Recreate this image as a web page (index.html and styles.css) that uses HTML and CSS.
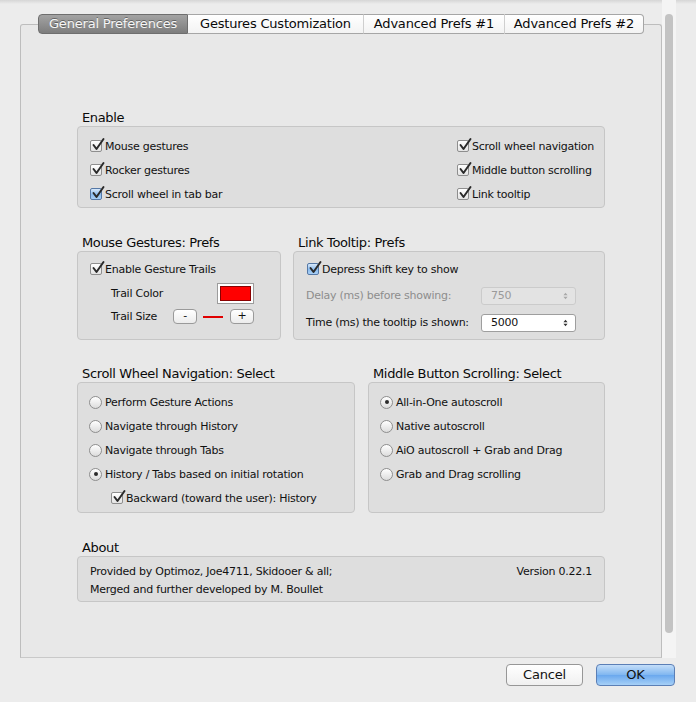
FILE: index.html
```html
<!DOCTYPE html>
<html>
<head>
<meta charset="utf-8">
<link rel="stylesheet" href="styles.css">
</head>
<body>
<div class="window">
  <div class="main">
    <div class="panel-wrap">
      <div class="tabs">
        <div class="tab active">General Preferences</div>
        <div class="tab">Gestures Customization</div>
        <div class="tab">Advanced Prefs #1</div>
        <div class="tab last">Advanced Prefs #2</div>
      </div>
      <div class="panel">
        <div class="group en">
          <div class="glabel">Enable</div>
          <div class="gbox enable">
            <div class="col">
              <div class="row"><span class="cb on"><svg viewBox="0 0 14 14"><path d="M2.5 7 L5.5 11 L12.5 1"/></svg></span>Mouse gestures</div>
              <div class="row"><span class="cb on"><svg viewBox="0 0 14 14"><path d="M2.5 7 L5.5 11 L12.5 1"/></svg></span>Rocker gestures</div>
              <div class="row"><span class="cb on blue"><svg viewBox="0 0 14 14"><path d="M2.5 7 L5.5 11 L12.5 1"/></svg></span>Scroll wheel in tab bar</div>
            </div>
            <div class="col">
              <div class="row"><span class="cb on"><svg viewBox="0 0 14 14"><path d="M2.5 7 L5.5 11 L12.5 1"/></svg></span>Scroll wheel navigation</div>
              <div class="row"><span class="cb on"><svg viewBox="0 0 14 14"><path d="M2.5 7 L5.5 11 L12.5 1"/></svg></span>Middle button scrolling</div>
              <div class="row"><span class="cb on"><svg viewBox="0 0 14 14"><path d="M2.5 7 L5.5 11 L12.5 1"/></svg></span>Link tooltip</div>
            </div>
          </div>
        </div>

        <div class="pair pair1">
          <div class="group mg">
            <div class="glabel">Mouse Gestures: Prefs</div>
            <div class="gbox mgbox">
              <div class="row"><span class="cb on"><svg viewBox="0 0 14 14"><path d="M2.5 7 L5.5 11 L12.5 1"/></svg></span>Enable Gesture Trails</div>
              <div class="row indent"><span class="lbl-color">Trail Color</span><span class="swatch"><span class="swatch-in"></span></span></div>
              <div class="row indent r3"><span class="lbl-size">Trail Size</span><span class="sbtn">-</span><span class="trail"></span><span class="sbtn">+</span></div>
            </div>
          </div>
          <div class="group lt">
            <div class="glabel">Link Tooltip: Prefs</div>
            <div class="gbox ltbox">
              <div class="row"><span class="cb on blue"><svg viewBox="0 0 14 14"><path d="M2.5 7 L5.5 11 L12.5 1"/></svg></span>Depress Shift key to show</div>
              <div class="row r-sel"><span class="sel-lbl dim">Delay (ms) before showing:</span><span class="select disabled"><span>750</span><span class="arr"><svg viewBox="0 0 6 9"><path d="M0.5 3.5 L3 0.5 L5.5 3.5 Z M0.5 5.5 L3 8.5 L5.5 5.5 Z"/></svg></span></span></div>
              <div class="row r-sel2"><span class="sel-lbl">Time (ms) the tooltip is shown:</span><span class="select"><span>5000</span><span class="arr"><svg viewBox="0 0 6 9"><path d="M0.5 3.5 L3 0.5 L5.5 3.5 Z M0.5 5.5 L3 8.5 L5.5 5.5 Z"/></svg></span></span></div>
            </div>
          </div>
        </div>

        <div class="pair pair2">
          <div class="group sw">
            <div class="glabel">Scroll Wheel Navigation: Select</div>
            <div class="gbox swbox">
              <div class="row"><span class="rb"></span>Perform Gesture Actions</div>
              <div class="row"><span class="rb"></span>Navigate through History</div>
              <div class="row"><span class="rb"></span>Navigate through Tabs</div>
              <div class="row"><span class="rb sel"></span>History / Tabs based on initial rotation</div>
              <div class="row sub"><span class="cb on"><svg viewBox="0 0 14 14"><path d="M2.5 7 L5.5 11 L12.5 1"/></svg></span>Backward (toward the user): History</div>
            </div>
          </div>
          <div class="group mb">
            <div class="glabel">Middle Button Scrolling: Select</div>
            <div class="gbox mbbox">
              <div class="row"><span class="rb sel"></span>All-in-One autoscroll</div>
              <div class="row"><span class="rb"></span>Native autoscroll</div>
              <div class="row"><span class="rb"></span>AiO autoscroll + Grab and Drag</div>
              <div class="row"><span class="rb"></span>Grab and Drag scrolling</div>
            </div>
          </div>
        </div>

        <div class="group about">
          <div class="glabel">About</div>
          <div class="gbox aboutbox">
            <div class="about-left">
              <div>Provided by Optimoz, Joe4711, Skidooer &amp; all;</div>
              <div>Merged and further developed by M. Boullet</div>
            </div>
            <div class="version">Version 0.22.1</div>
          </div>
        </div>
      </div>
    </div>
    <div class="gutter"><div class="thumb"></div></div>
  </div>
  <div class="buttons">
    <div class="btn">Cancel</div>
    <div class="btn ok">OK</div>
  </div>
</div>
</body>
</html>
```

FILE: styles.css
```css
html, body {
  margin: 0;
  padding: 0;
}
body {
  width: 696px;
  height: 702px;
  overflow: hidden;
  background: #ececec;
  font-family: "DejaVu Sans", sans-serif;
  font-size: 11px;
  letter-spacing: -0.25px;
  color: #111;
}
.window {
  width: 696px;
  height: 702px;
  background: linear-gradient(#d6d6d6 0, #ececec 4px);
}
.main {
  display: flex;
  height: 658px;
}
.panel-wrap {
  margin-left: 20px;
  width: 642px;
  padding-top: 14px;
  display: flex;
  flex-direction: column;
}
.tabs {
  position: relative;
  z-index: 1;
  display: flex;
  justify-content: center;
  height: 20px;
  margin-bottom: -10px;
}
.tab {
  box-sizing: border-box;
  height: 20px;
  line-height: 18px;
  font-size: 13px;
  letter-spacing: -0.2px;
  text-align: center;
  color: #0a0a0a;
  background: linear-gradient(#ffffff, #f3f3f3);
  border-top: 1px solid #a6a6a6;
  border-bottom: 1px solid #a6a6a6;
  border-left: 1px solid #cfcfcf;
}
.tab:nth-child(1) { width: 150px; }
.tab:nth-child(2) { width: 175px; }
.tab:nth-child(3) { width: 141px; }
.tab:nth-child(4) { width: 140px; }
.tab.active {
  color: #f6f6f6;
  background: linear-gradient(#a3a3a3, #7d7d7d);
  border: 1px solid #6e6e6e;
  border-radius: 4px 0 0 4px;
  text-shadow: 0 -1px 0 rgba(0,0,0,0.35);
}
.tab.active + .tab { border-left: none; }
.tab.last {
  border-right: 1px solid #a6a6a6;
  border-radius: 0 4px 4px 0;
}
.panel {
  box-sizing: border-box;
  height: 634px;
  background: #e8e8e8;
  border: 1px solid #bdbdbd;
  border-bottom-color: #c9c9c9;
  border-radius: 3px 3px 0 0;
  padding: 85px 0 0 56px;
}
.group {
  display: flex;
  flex-direction: column;
}
.glabel {
  height: 16px;
  line-height: 16px;
  font-size: 13px;
  letter-spacing: -0.35px;
  padding-left: 5px;
  color: #0a0a0a;
}
.gbox {
  box-sizing: border-box;
  background: #dedede;
  border: 1px solid #c6c6c6;
  border-radius: 4px;
}
.row {
  display: flex;
  align-items: center;
  height: 24px;
  white-space: nowrap;
}
.cb {
  position: relative;
  box-sizing: border-box;
  width: 12px;
  height: 12px;
  margin-right: 3px;
  border: 1px solid #8e8e8e;
  border-radius: 2px;
  background: linear-gradient(#ffffff, #e4e4e4);
  flex: none;
}
.cb.blue {
  border-color: #5578a6;
  background: linear-gradient(#d7e8fa, #8bbcef 55%, #a9d0f6);
}
.cb svg {
  position: absolute;
  left: 0px;
  top: -3px;
  width: 14px;
  height: 14px;
  overflow: visible;
}
.cb svg path {
  fill: none;
  stroke: #2a2a2a;
  stroke-width: 2;
  stroke-linecap: round;
  stroke-linejoin: round;
}
.rb {
  position: relative;
  box-sizing: border-box;
  width: 13px;
  height: 13px;
  margin-right: 3px;
  border: 1px solid #8e8e8e;
  border-radius: 50%;
  background: linear-gradient(#ffffff, #dcdcdc);
  flex: none;
}
.rb.sel::after {
  content: "";
  position: absolute;
  left: 3.5px;
  top: 3.5px;
  width: 4px;
  height: 4px;
  border-radius: 50%;
  background: #2a2a2a;
}
/* Enable */
.en .gbox { width: 528px; }
.enable {
  height: 82px;
  display: grid;
  grid-template-columns: 367px auto;
  padding: 7px 0 0 12px;
}
.pair {
  display: flex;
}
.pair1 { gap: 12px; margin-top: 27px; }
.pair2 { gap: 13px; margin-top: 26px; }
.mg .gbox { width: 204px; }
.lt .gbox { width: 312px; }
.mgbox, .ltbox { height: 89px; }
.mgbox {
  padding: 5px 0 0 12px;
}
.mgbox .indent { padding-left: 21px; }
.mgbox .r3 { height: 23px; }
.lbl-color { width: 106px; }
.lbl-size { width: 62px; }
.swatch {
  box-sizing: border-box;
  width: 37px;
  height: 21px;
  border: 1px solid #9c9c9c;
  background: #fff;
  padding: 2px;
  display: flex;
}
.swatch-in {
  flex: 1;
  background: #ff0000;
  border: 1px solid #8a0000;
}
.sbtn {
  box-sizing: border-box;
  width: 24px;
  height: 15px;
  line-height: 12px;
  text-align: center;
  font-size: 11px;
  border: 1px solid #9a9a9a;
  border-radius: 4px;
  background: linear-gradient(#ffffff, #ececec);
}
.trail {
  width: 20px;
  height: 2px;
  background: #e00000;
  margin: 0 7px 0 6px;
}
.ltbox {
  padding: 5px 0 0 13px;
}
.ltbox .r-sel { height: 28px; padding-top: 1px; box-sizing: border-box; }
.ltbox .r-sel2 { height: 27px; }
.sel-lbl { width: 175px; margin-left: -1px; }
.dim { color: #8d8d8d; }
.select {
  box-sizing: border-box;
  width: 95px;
  height: 18px;
  display: flex;
  align-items: center;
  justify-content: space-between;
  padding: 0 7px 0 9px;
  background: #ffffff;
  border: 1px solid #9e9e9e;
  border-radius: 3px;
  color: #111;
}
.select.disabled {
  background: #e3e3e3;
  border-color: #cbcbcb;
  color: #9a9a9a;
}
.arr svg {
  display: block;
  width: 5px;
  height: 8px;
  fill: #333;
}
.select.disabled .arr svg { fill: #a8a8a8; }
.sw .gbox { width: 278px; }
.mb .gbox { width: 237px; }
.swbox, .mbbox {
  height: 131px;
  padding: 7px 0 0 11px;
}
.swbox .sub { padding-left: 22px; }
.about { margin-top: 27px; }
.aboutbox {
  width: 528px;
  height: 46px;
  padding: 6px 12px 0 12px;
  display: flex;
  justify-content: space-between;
  line-height: 18px;
}
.gutter {
  width: 14px;
  background: #f4f4f4;
  height: 658px;
}
.thumb {
  width: 8px;
  margin: 14px 0 0 3px;
  height: 619px;
  border-radius: 4px;
  background: #c3c3c3;
}
.buttons {
  display: flex;
  justify-content: flex-end;
  gap: 13px;
  padding: 6px 21px 0 0;
}
.btn {
  box-sizing: border-box;
  width: 77px;
  height: 22px;
  line-height: 20px;
  text-align: center;
  font-size: 13px;
  letter-spacing: -0.2px;
  border: 1px solid #979797;
  border-radius: 4px;
  background: linear-gradient(#ffffff, #f0f0f0);
  color: #111;
}
.btn.ok {
  width: 79px;
  border-color: #5b7fb6;
  background: linear-gradient(#c4def9, #7fb6f0 50%, #6aa8ee 51%, #a6d0f7);
}
```
